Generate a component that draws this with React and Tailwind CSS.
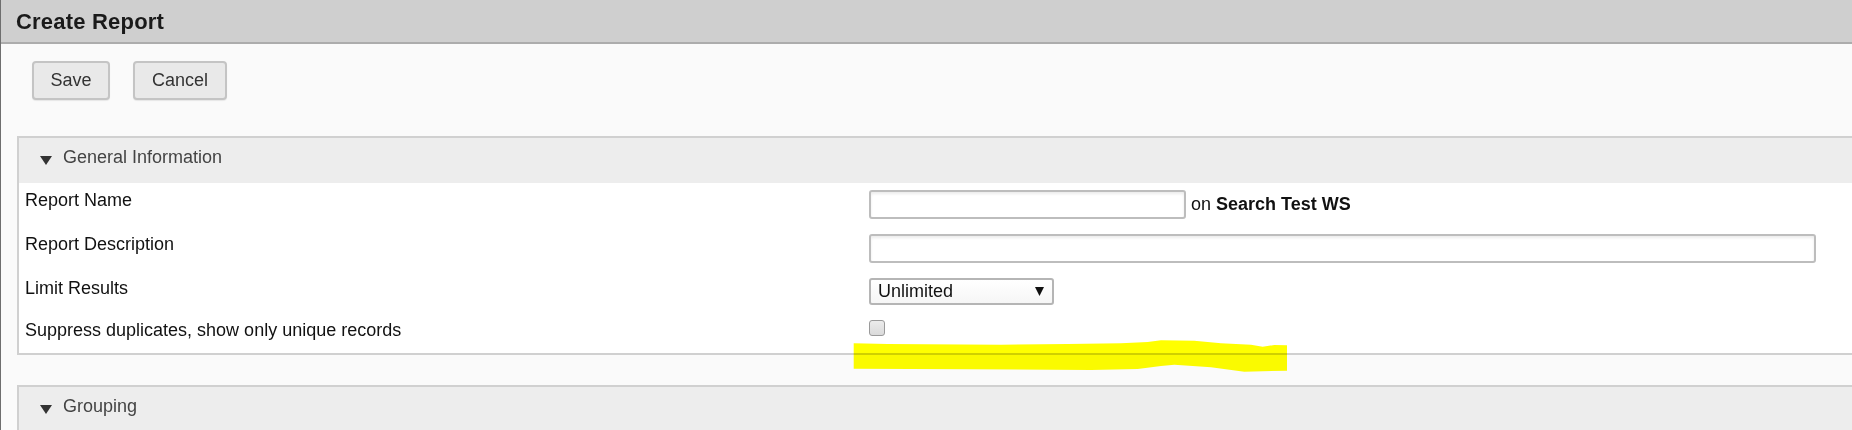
import React from 'react';

function Caret({ className }) {
  return (
    <svg className={className} width="12" height="9" viewBox="0 0 12 9">
      <polygon points="0,0 12,0 6,9" fill="#333333" />
    </svg>
  );
}

function Panel({ title, children }) {
  return (
    <div className="border-2 border-r-0 border-[#d0d0d0] bg-white">
      <div className="flex h-[45px] items-center bg-[#ededed] pl-[21px]">
        <Caret className="shrink-0" />
        <span className="mb-[6px] ml-[11px] text-[18px] text-[#444444]">{title}</span>
      </div>
      {children}
    </div>
  );
}

function Row({ label, last, children }) {
  return (
    <div className={`flex items-start ${last ? '' : 'pb-[15px]'}`}>
      <div className="w-[844px] shrink-0 text-[18px] leading-[21px] text-[#111111]">{label}</div>
      {children}
    </div>
  );
}

const inputCls = 'h-[29px] rounded-[3px] border-2 border-[#bdbdbd] bg-white shadow-[inset_0_2px_3px_rgba(0,0,0,0.08)]';

export default function App() {
  return (
    <div className="relative h-[430px] w-[1852px] overflow-hidden border-l border-[#6e6e6e] bg-[#fafafa] font-['Liberation_Sans',Arial,sans-serif]">
      <div className="flex h-[44px] items-center border-b-2 border-[#acacac] bg-[#cfcfcf] pl-[15px]">
        <h1 className="text-[22px] font-bold tracking-[0.2px] text-[#1a1a1a]">Create Report</h1>
      </div>

      <div className="pl-[16px]">
        <div className="flex gap-[23px] pl-[15px] pt-[17px]">
          <button
            type="button"
            className="h-[39px] w-[78px] rounded-[4px] border-2 border-[#c4c4c4] bg-[#e9e9e9] text-[18px] text-[#333333] shadow-[0_1px_1px_rgba(0,0,0,0.08)]"
          >
            Save
          </button>
          <button
            type="button"
            className="h-[39px] w-[94px] rounded-[4px] border-2 border-[#c4c4c4] bg-[#e9e9e9] text-[18px] text-[#333333] shadow-[0_1px_1px_rgba(0,0,0,0.08)]"
          >
            Cancel
          </button>
        </div>

        <div className="mt-[36px]">
          <Panel title="General Information">
            <div className="pb-[12px] pl-[6px] pt-[7px]">
              <Row label="Report Name">
                <div className="flex items-center">
                  <div className={`${inputCls} w-[317px]`} />
                  <span className="ml-[5px] text-[18px] text-[#111111]">
                    on <b className="font-bold">Search Test WS</b>
                  </span>
                </div>
              </Row>
              <Row label="Report Description">
                <div className={`${inputCls} w-[947px]`} />
              </Row>
              <Row label="Limit Results">
                <div className="flex h-[27px] w-[185px] items-center justify-between rounded-[3px] border-2 border-[#b5b5b5] bg-gradient-to-b from-white to-[#f6f6f6] pl-[7px] pr-[8px] text-[18px] text-[#111111]">
                  <span>Unlimited</span>
                  <svg width="9" height="9" viewBox="0 0 9 9">
                    <polygon points="0,0 9,0 4.5,9" fill="#111111" />
                  </svg>
                </div>
              </Row>
              <Row label="Suppress duplicates, show only unique records" last>
                <div className="h-[16px] w-[16px] rounded-[3px] border border-[#9a9a9a] bg-gradient-to-b from-[#ececec] to-[#dadada]" />
              </Row>
            </div>
          </Panel>
        </div>

        <div className="mt-[30px]">
          <Panel title="Grouping">
            <div className="h-[40px]" />
          </Panel>
        </div>
      </div>

      <svg
        className="pointer-events-none absolute left-[852px] top-[340px] mix-blend-multiply"
        width="436"
        height="33"
        viewBox="0 0 436 33"
      >
        <polygon
          fill="#ffff00"
          points="0.7,3.3 34.7,4 148,4.7 214.7,4 268,3.3 294.7,2 308,0.3 341.3,0.7 368,3.3 398,4.7 409.7,6.7 421.3,5 434,5.3 434,30.7 391.3,31.7 358,27.3 321.3,24.7 308,26 284.7,29 238,30 114.7,29.3 0.7,28.7"
        />
      </svg>
    </div>
  );
}
